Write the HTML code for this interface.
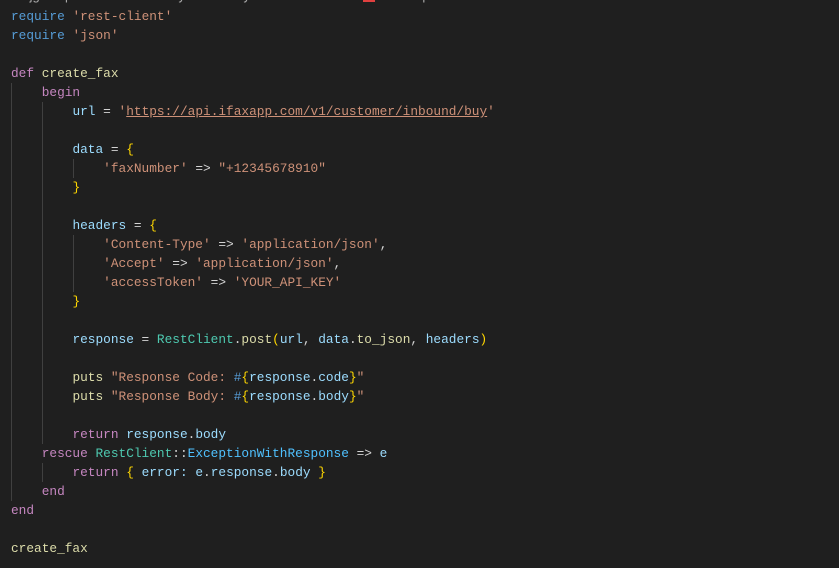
<!DOCTYPE html>
<html><head><meta charset="utf-8"><style>
html,body{margin:0;padding:0;width:839px;height:568px;background:#1f1f1f;overflow:hidden}
.bc{position:absolute;top:-12px;left:0;font:13px "Liberation Sans",sans-serif;color:#a9a9a9;white-space:pre}
.bc i{display:inline-block;width:12px;height:10px;background:#e0403f;vertical-align:middle;font-style:normal}
pre{position:absolute;left:11px;top:7px;margin:0;font:12.8px/19px "Liberation Mono",monospace;color:#d4d4d4}
.k{color:#c586c0}.r{color:#569cd6}.s{color:#ce9178}.f{color:#dcdcaa}.v{color:#9cdcfe}.c{color:#4ec9b0}
.y{color:#ffd700}.p{color:#da70d6}.b{color:#179fff}.u{text-decoration:underline}
.g{position:absolute;width:1px;background:#404040}
</style></head><body>
<div class="bc">ers › jgnamp › Downloads › rubycode › rubycode › faxnumber › <i></i> numberpurchase.rb</div>
<div class="g" style="left:11px;top:83px;height:418px"></div>
<div class="g" style="left:42px;top:102px;height:342px"></div>
<div class="g" style="left:42px;top:463px;height:19px"></div>
<div class="g" style="left:73px;top:159px;height:19px"></div>
<div class="g" style="left:73px;top:235px;height:57px"></div>
<pre><span class="r">require</span> <span class="s">'rest-client'</span>
<span class="r">require</span> <span class="s">'json'</span>

<span class="k">def</span> <span class="f">create_fax</span>
    <span class="k">begin</span>
        <span class="v">url</span> = <span class="s">'<span class="u">https://api.ifaxapp.com/v1/customer/inbound/buy</span>'</span>

        <span class="v">data</span> = <span class="y">{</span>
            <span class="s">'faxNumber'</span> =&gt; <span class="s">"+12345678910"</span>
        <span class="y">}</span>

        <span class="v">headers</span> = <span class="y">{</span>
            <span class="s">'Content-Type'</span> =&gt; <span class="s">'application/json'</span>,
            <span class="s">'Accept'</span> =&gt; <span class="s">'application/json'</span>,
            <span class="s">'accessToken'</span> =&gt; <span class="s">'YOUR_API_KEY'</span>
        <span class="y">}</span>

        <span class="v">response</span> = <span class="c">RestClient</span>.<span class="f">post</span><span class="y">(</span><span class="v">url</span>, <span class="v">data</span>.<span class="f">to_json</span>, <span class="v">headers</span><span class="y">)</span>

        <span class="f">puts</span> <span class="s">"Response Code: </span><span class="r">#</span><span class="y">{</span><span class="v">response</span>.<span class="v">code</span><span class="y">}</span><span class="s">"</span>
        <span class="f">puts</span> <span class="s">"Response Body: </span><span class="r">#</span><span class="y">{</span><span class="v">response</span>.<span class="v">body</span><span class="y">}</span><span class="s">"</span>

        <span class="k">return</span> <span class="v">response</span>.<span class="v">body</span>
    <span class="k">rescue</span> <span class="c">RestClient</span>::<span class="c" style="color:#4fc1ff">ExceptionWithResponse</span> =&gt; <span class="v">e</span>
        <span class="k">return</span> <span class="y">{</span> <span class="v">error:</span> <span class="v">e</span>.<span class="v">response</span>.<span class="v">body</span> <span class="y">}</span>
    <span class="k">end</span>
<span class="k">end</span>

<span class="f">create_fax</span></pre>
</body></html>
